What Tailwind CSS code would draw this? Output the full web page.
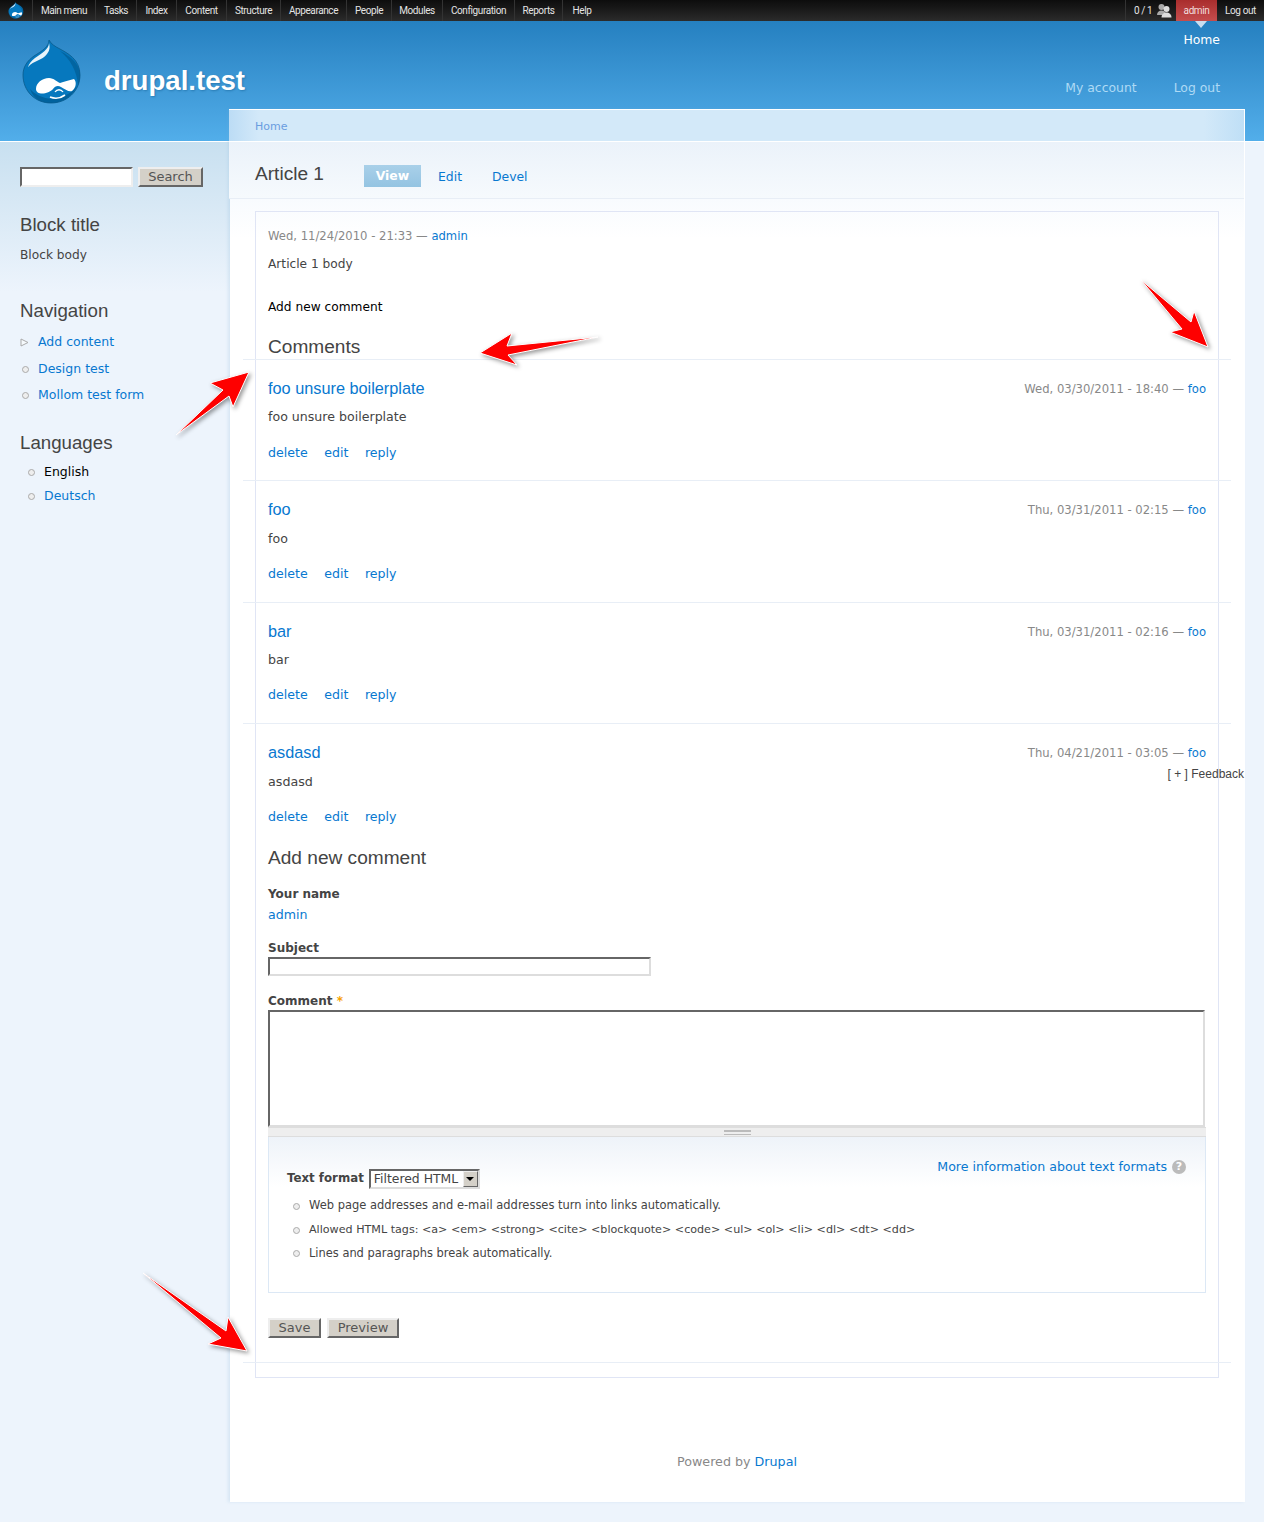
<!DOCTYPE html>
<html lang="en">
<head>
  <meta charset="UTF-8">
  <title>Article 1 | drupal.test</title>
  <script src="https://cdn.jsdelivr.net/npm/@tailwindcss/browser@4"></script>
</head>
<body class="relative h-[1522px] overflow-hidden bg-[#edf4fc] font-['DejaVu_Sans',sans-serif] text-[12.2px] text-[#444]">

  <svg class="hidden">
    <symbol id="drop" viewBox="0 0 60 66">
      <path d="M27 1C27 8 20 12 12 17C5 22 1 28 1 36C1 52 13 64 29 64C45 64 58 52 58 36C58 20 45 14 38 10C33 7.5 29 5 27 1Z" fill="#0678be" stroke="#0a5a8c" stroke-width=".8"/>
      <path d="M38 12C50 18 58 26 58 36C58 40 57 44 56 46C55 32 48 20 38 12Z" fill="#00598e" opacity=".6"/>
      <path d="M8 50C12 62 22 64 29 64C42 64 52 56 55 46C52 52 46 56 38 58C28 62 15 58 8 50Z" fill="#00598e" opacity=".7"/>
      <path d="M27 4C27 10 20 14 13 19C9 22 7 25 6 28C12 21 20 22 25 15C28 11 28 8 27 4Z" fill="#e8f3fa"/>
      <path d="M14 50C14 44 20 39 27 39C32 39 35 43 38 44C42 43 47 41 52 40C55 43 54 49 50 52C47 53.5 43 50 39 48C36 46 33 47 31 50C27 55 14 57 14 50Z" fill="#fff"/>
      <path d="M28 58C33 60 39 59 43 56" fill="none" stroke="#fff" stroke-width="1.6"/>
      <path d="M33 53C35 50 39 50 41 53" fill="none" stroke="#fff" stroke-width="1.3"/>
    </symbol>
  </svg>

  <!-- toolbar -->
  <div class="flex h-[21px] items-center justify-between bg-gradient-to-b from-[#0d0d0d] to-[#2b2b2b] font-['Roboto',sans-serif] text-[10px] tracking-[-0.4px] text-[#e4e4e4]">
    <div class="flex h-full items-center">
      <div class="flex h-full w-[33px] items-center border-r border-[#333] pl-[8px]">
        <svg class="h-[17px] w-[16px]"><use href="#drop"/></svg>
      </div>
      <a class="flex h-full w-[63px] items-center justify-center border-r border-[#333]">Main menu</a>
      <a class="flex h-full w-[41px] items-center justify-center border-r border-[#333]">Tasks</a>
      <a class="flex h-full w-[40px] items-center justify-center border-r border-[#333]">Index</a>
      <a class="flex h-full w-[50px] items-center justify-center border-r border-[#333]">Content</a>
      <a class="flex h-full w-[54px] items-center justify-center border-r border-[#333]">Structure</a>
      <a class="flex h-full w-[66px] items-center justify-center border-r border-[#333]">Appearance</a>
      <a class="flex h-full w-[45px] items-center justify-center border-r border-[#333]">People</a>
      <a class="flex h-full w-[51px] items-center justify-center border-r border-[#333]">Modules</a>
      <a class="flex h-full w-[72px] items-center justify-center border-r border-[#333]">Configuration</a>
      <a class="flex h-full w-[48px] items-center justify-center border-r border-[#333]">Reports</a>
      <a class="flex h-full w-[38px] items-center justify-center">Help</a>
    </div>
    <div class="flex h-full items-center">
      <div class="flex h-full w-[51px] items-center border-l border-[#333] pl-[8px]">
        <span class="w-[23px]">0 / 1</span>
        <svg class="h-[15px] w-[15px]" viewBox="0 0 15 15"><circle cx="4.5" cy="4" r="3" fill="#aaa"/><path d="M0 12C0 9 2 7.5 4.5 7.5S9 9 9 12Z" fill="#aaa"/><circle cx="9.5" cy="6" r="3" fill="#ddd"/><path d="M4.5 14.5C4.5 11 7 9.5 9.5 9.5S14.5 11 14.5 14.5Z" fill="#ddd"/></svg>
      </div>
      <a class="flex h-full w-[41px] items-center justify-center bg-gradient-to-b from-[#a92d2d] to-[#c54d4d] text-[#f2dede]">admin</a>
      <a class="flex h-full w-[47px] items-center justify-center">Log out</a>
    </div>
  </div>

  <!-- header -->
  <header class="relative flex h-[121px] justify-between border-b border-white bg-gradient-to-b from-[#2580c0] to-[#52aeea]">
    <div class="flex items-start pl-[22px] pt-[18px]">
      <svg class="h-[66px] w-[60px]"><use href="#drop"/></svg>
      <span class="ml-[22px] mt-[24px] font-['Liberation_Sans',sans-serif] text-[27.6px] leading-[36px] font-bold text-white [text-shadow:1px_1px_2px_#0b4f8066]">drupal.test</span>
    </div>
    <div class="flex flex-col items-end pr-[44px] pt-[10px] text-[12.4px]">
      <a class="leading-[18px] text-white">Home</a>
      <div class="mt-[30px] flex gap-[37px] leading-[18px] text-[#aedaf5]">
        <a>My account</a>
        <a>Log out</a>
      </div>
    </div>
    <div class="absolute right-[57px] top-0 h-0 w-0 border-x-[6px] border-t-[7px] border-x-transparent border-t-[#c9def0]"></div>
  </header>

  <div class="flex items-start">
    <!-- sidebar -->
    <aside class="h-[150px] w-[230px] shrink-0 bg-gradient-to-b from-[#c8e0f0] to-[#edf4fc] pl-[20px] pt-[25px]">
      <form class="flex gap-[5px]">
        <input class="h-[20px] w-[113px] border-2 border-t-[#666] border-r-[#eee] border-b-[#eee] border-l-[#666] bg-white">
        <button type="button" class="h-[20px] w-[65px] border-2 border-t-[#eee] border-r-[#666] border-b-[#666] border-l-[#eee] bg-[#d4d0c8] text-[13px] leading-[14px] text-[#555]">Search</button>
      </form>
      <h2 class="mt-[26px] font-['Liberation_Sans',sans-serif] text-[18.7px] leading-[24px]">Block title</h2>
      <p class="mt-[8px] leading-[20px]">Block body</p>
      <h2 class="mt-[34px] font-['Liberation_Sans',sans-serif] text-[18.7px] leading-[24px]">Navigation</h2>
      <ul class="mt-[6px] text-[12.5px] text-[#0878d0]">
        <li class="flex h-[27px] items-center">
          <svg class="mr-[9px] h-[9px] w-[9px]" viewBox="0 0 9 9"><path d="M1 1L8 4.5L1 8Z" fill="#f6fafd" stroke="#aaa"/></svg>
          <a>Add content</a>
        </li>
        <li class="flex h-[26px] items-center">
          <span class="ml-[2px] mr-[9px] h-[7px] w-[7px] rounded-full border border-[#aaa] bg-[#eee]"></span>
          <a>Design test</a>
        </li>
        <li class="flex h-[26px] items-center">
          <span class="ml-[2px] mr-[9px] h-[7px] w-[7px] rounded-full border border-[#aaa] bg-[#eee]"></span>
          <a>Mollom test form</a>
        </li>
      </ul>
      <h2 class="mt-[23px] font-['Liberation_Sans',sans-serif] text-[18.7px] leading-[24px]">Languages</h2>
      <ul class="mt-[5px] pl-[8px] text-[12.5px]">
        <li class="flex h-[24px] items-center text-black">
          <span class="mr-[9px] h-[7px] w-[7px] rounded-full border border-[#aaa] bg-[#eee]"></span>
          <a>English</a>
        </li>
        <li class="flex h-[24px] items-center text-[#0878d0]">
          <span class="mr-[9px] h-[7px] w-[7px] rounded-full border border-[#aaa] bg-[#eee]"></span>
          <a>Deutsch</a>
        </li>
      </ul>
    </aside>

    <!-- main column -->
    <main class="relative -mt-[33px] h-[1393px] w-[1015px] border-r border-white bg-white shadow-[-2px_0_3px_#7fb0d433]">
      <div class="-ml-[1px] flex h-[32px] items-center border-t border-white bg-[linear-gradient(to_right,#bcdcf5,#d3e9f9_30px,#d3e9f9_calc(100%-40px),#bfdff6)] pl-[26px] pt-[4px] text-[11px] text-[#6a9de0]">
        <a>Home</a>
      </div>
      <div class="-ml-[1px] flex h-[58px] items-center border-t border-b border-t-white border-b-[#e8eef6] bg-gradient-to-b from-[#ebf2fa] to-[#f6fafd] pl-[26px] pt-[16px]">
        <h1 class="-mt-[8px] w-[109px] font-['Liberation_Sans',sans-serif] text-[19.1px] leading-[24px]">Article 1</h1>
        <div class="flex items-center text-[12.4px] text-[#0878d0]">
          <a class="-mt-[4px] flex h-[22px] w-[57px] items-center justify-center bg-gradient-to-b from-[#a9d0e9] to-[#94c4e2] font-bold text-white">View</a>
          <a class="-mt-[2px] ml-[17px]">Edit</a>
          <a class="-mt-[2px] ml-[30px]">Devel</a>
        </div>
      </div>

      <div class="bg-gradient-to-b from-[#f8fbfe] to-white to-[40px] pl-[25px] pr-[25px] pt-[12px]">
        <article class="h-[1167px] w-[964px] border border-[#e0e5f5] bg-transparent">
          <div class="px-[12px] pt-[14px]">
            <p class="text-[11.6px] leading-[20px] text-[#888]">Wed, 11/24/2010 - 21:33 — <a class="text-[#0878d0]">admin</a></p>
            <p class="mt-[8px] leading-[20px]">Article 1 body</p>
            <p class="mt-[23px] leading-[20px] text-black">Add new comment</p>
            <h2 class="mt-[18px] font-['Liberation_Sans',sans-serif] text-[19.1px] leading-[24px]">Comments</h2>
          </div>

          <div class="-mx-[13px] border-t border-[#e8eef6]">
            <div class="h-[121px] border-b border-[#e8eef6] px-[25px] pt-[18px]">
              <div class="flex h-[20px] items-center justify-between leading-[20px]">
                <a class="font-['Liberation_Sans',sans-serif] text-[16.3px] text-[#0878d0]">foo unsure boilerplate</a>
                <span class="pt-[2px] text-[11.6px] text-[#888]">Wed, 03/30/2011 - 18:40 — <a class="text-[#0878d0]">foo</a></span>
              </div>
              <p class="mt-[9px] text-[12.6px] leading-[20px]">foo unsure boilerplate</p>
              <div class="mt-[16px] flex gap-[16.5px] text-[12.6px] leading-[20px] text-[#0878d0]"><a>delete</a><a>edit</a><a>reply</a></div>
            </div>
            <div class="h-[122px] border-b border-[#e8eef6] px-[25px] pt-[18px]">
              <div class="flex h-[20px] items-center justify-between leading-[20px]">
                <a class="font-['Liberation_Sans',sans-serif] text-[16.3px] text-[#0878d0]">foo</a>
                <span class="pt-[2px] text-[11.6px] text-[#888]">Thu, 03/31/2011 - 02:15 — <a class="text-[#0878d0]">foo</a></span>
              </div>
              <p class="mt-[10px] text-[12.6px] leading-[20px]">foo</p>
              <div class="mt-[15px] flex gap-[16.5px] text-[12.6px] leading-[20px] text-[#0878d0]"><a>delete</a><a>edit</a><a>reply</a></div>
            </div>
            <div class="h-[121px] border-b border-[#e8eef6] px-[25px] pt-[18px]">
              <div class="flex h-[20px] items-center justify-between leading-[20px]">
                <a class="font-['Liberation_Sans',sans-serif] text-[16.3px] text-[#0878d0]">bar</a>
                <span class="pt-[2px] text-[11.6px] text-[#888]">Thu, 03/31/2011 - 02:16 — <a class="text-[#0878d0]">foo</a></span>
              </div>
              <p class="mt-[9px] text-[12.6px] leading-[20px]">bar</p>
              <div class="mt-[15px] flex gap-[16.5px] text-[12.6px] leading-[20px] text-[#0878d0]"><a>delete</a><a>edit</a><a>reply</a></div>
            </div>
            <div class="h-[639px] border-b border-[#e8eef6] px-[25px] pt-[18px]">
              <div class="flex h-[20px] items-center justify-between leading-[20px]">
                <a class="font-['Liberation_Sans',sans-serif] text-[16.3px] text-[#0878d0]">asdasd</a>
                <span class="pt-[2px] text-[11.6px] text-[#888]">Thu, 04/21/2011 - 03:05 — <a class="text-[#0878d0]">foo</a></span>
              </div>
              <p class="mt-[10px] text-[12.7px] leading-[20px]">asdasd</p>
              <div class="mt-[15px] flex gap-[16.5px] text-[12.6px] leading-[20px] text-[#0878d0]"><a>delete</a><a>edit</a><a>reply</a></div>

              <h2 class="mt-[19px] font-['Liberation_Sans',sans-serif] text-[19.1px] leading-[24px]">Add new comment</h2>
              <form>
                <label class="mt-[14px] block text-[12px] font-bold leading-[20px]">Your name</label>
                <a class="mt-[1px] block text-[12.6px] leading-[20px] text-[#0878d0]">admin</a>
                <label class="mt-[13px] block text-[12px] font-bold leading-[20px]">Subject</label>
                <input class="-mt-[1px] block h-[19px] w-[383px] border-2 border-t-[#666] border-r-[#ddd] border-b-[#ddd] border-l-[#666] bg-white">
                <label class="mt-[15px] block text-[12px] font-bold leading-[20px]">Comment <span class="text-[#f7a200]">*</span></label>
                <textarea class="-mt-[1px] block h-[117px] w-[937px] resize-none border-2 border-t-[#666] border-r-[#ddd] border-b-[#ddd] border-l-[#666] bg-white"></textarea>
                <div class="flex h-[10px] w-[938px] items-center justify-center border-y border-[#ddd] bg-[#eee]">
                  <div class="h-[5px] w-[27px] border-y-2 border-b border-[#bbb]"></div>
                </div>
                <div class="h-[156px] w-[938px] border border-t-0 border-[#dce8f5] bg-gradient-to-b from-[#eef3f9] to-white to-[50px] pl-[18px] pr-[19px] pt-[32px]">
                  <div class="flex items-start justify-between">
                    <div class="flex items-center">
                      <label class="text-[11.8px] font-bold">Text format</label>
                      <div class="ml-[5px] flex h-[20px] w-[111px] items-center justify-between border-2 border-t-[#666] border-r-[#ddd] border-b-[#ddd] border-l-[#666] bg-white pl-[3px] text-[12.4px] text-[#444]">
                        <span>Filtered HTML</span>
                        <span class="flex h-[16px] w-[15px] items-center justify-center border border-t-[#eee] border-r-[#666] border-b-[#666] border-l-[#eee] bg-[#d4d0c8]"><span class="h-0 w-0 border-x-[4px] border-t-[4px] border-x-transparent border-t-black"></span></span>
                      </div>
                    </div>
                    <div class="-mt-[11px] flex items-center text-[12.6px] text-[#0878d0]">
                      <a>More information about text formats</a>
                      <span class="ml-[5px] flex h-[14px] w-[14px] items-center justify-center rounded-full bg-[#bbb] text-[11px] font-bold text-white">?</span>
                    </div>
                  </div>
                  <ul class="mt-[5px]">
                    <li class="flex h-[24px] items-center text-[11.48px]"><span class="ml-[6px] mr-[9px] h-[7px] w-[7px] rounded-full border border-[#aaa] bg-[#eee]"></span>Web page addresses and e-mail addresses turn into links automatically.</li>
                    <li class="flex h-[24px] items-center text-[11.13px]"><span class="ml-[6px] mr-[9px] h-[7px] w-[7px] rounded-full border border-[#aaa] bg-[#eee]"></span>Allowed HTML tags: &lt;a&gt; &lt;em&gt; &lt;strong&gt; &lt;cite&gt; &lt;blockquote&gt; &lt;code&gt; &lt;ul&gt; &lt;ol&gt; &lt;li&gt; &lt;dl&gt; &lt;dt&gt; &lt;dd&gt;</li>
                    <li class="flex h-[23px] items-center text-[11.43px]"><span class="ml-[6px] mr-[9px] h-[7px] w-[7px] rounded-full border border-[#aaa] bg-[#eee]"></span>Lines and paragraphs break automatically.</li>
                  </ul>
                </div>
                <div class="mt-[25px] flex gap-[6px]">
                  <button type="button" class="h-[20px] w-[53px] border-2 border-t-[#eee] border-r-[#666] border-b-[#666] border-l-[#eee] bg-[#d4d0c8] text-[13px] leading-[14px] text-[#555]">Save</button>
                  <button type="button" class="h-[20px] w-[72px] border-2 border-t-[#eee] border-r-[#666] border-b-[#666] border-l-[#eee] bg-[#d4d0c8] text-[13px] leading-[14px] text-[#555]">Preview</button>
                </div>
              </form>
            </div>
          </div>
        </article>
      </div>

      <p class="mt-[74px] text-center text-[12.7px] leading-[20px] text-[#888]">Powered by <a class="text-[#0878d0]">Drupal</a></p>

      <a class="absolute right-0 top-[656px] font-['Liberation_Sans',sans-serif] text-[12px] leading-[18px] text-[#444]">[ + ] Feedback</a>
    </main>
  </div>

  <!-- red arrows drawn on top of the screenshot -->
  <svg class="pointer-events-none absolute left-0 top-0 h-[1522px] w-[1264px] drop-shadow-[2px_2px_2px_#0006]" viewBox="0 0 1264 1522">
    <g fill="#fe0000" stroke="#fff" stroke-width="1" stroke-linejoin="miter">
      <polygon points="1141,280 1191,322 1194,311 1208,347 1170,332 1182,329"/>
      <polygon points="598,337 507,346 512,333 480,353 517,365 508,355"/>
      <polygon points="176,435 223,390 210,383 249,372 233,407 229,396"/>
      <polygon points="143,1273 226,1331 228,1317 247,1351 208,1344 221,1338"/>
    </g>
  </svg>
</body>
</html>
